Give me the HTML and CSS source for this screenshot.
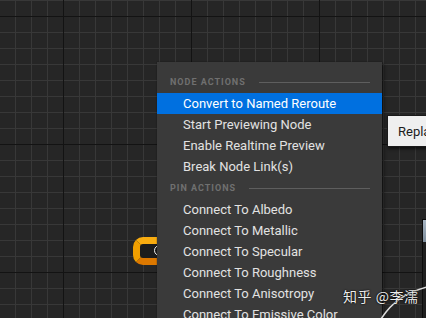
FILE: index.html
```html
<!DOCTYPE html>
<html>
<head>
<meta charset="utf-8">
<link rel="stylesheet" href="styles.css">
</head>
<body>
<div class="canvas">
  <div class="node-pin"><span class="pin-dot"></span></div>
  <div class="node-right"><div class="node-right-head"></div></div>
  <div class="menu">
    <div class="section"><span class="section-label">NODE ACTIONS</span><span class="section-line"></span></div>
    <div class="item active">Convert to Named Reroute</div>
    <div class="item">Start Previewing Node</div>
    <div class="item">Enable Realtime Preview</div>
    <div class="item">Break Node Link(s)</div>
    <div class="section"><span class="section-label">PIN ACTIONS</span><span class="section-line"></span></div>
    <div class="item">Connect To Albedo</div>
    <div class="item">Connect To Metallic</div>
    <div class="item">Connect To Specular</div>
    <div class="item">Connect To Roughness</div>
    <div class="item">Connect To Anisotropy</div>
    <div class="item">Connect To Emissive Color</div>
  </div>
  <div class="tooltip">Replace</div>
  <svg class="wire" width="426" height="318" viewBox="0 0 426 318">
    <path d="M381 319 C 392 302, 405 293, 427 287" fill="none" stroke="#dcdcdc" stroke-width="1.6"/>
  </svg>
  <div class="watermark">知乎 @李濡</div>
</div>
</body>
</html>
```
FILE: styles.css
```css
html, body {
  margin: 0;
  padding: 0;
  width: 426px;
  height: 318px;
  overflow: hidden;
}
.canvas {
  position: relative;
  width: 426px;
  height: 318px;
  overflow: hidden;
  background-color: #262626;
  background-image:
    linear-gradient(90deg, #131313 1px, transparent 1px),
    linear-gradient(180deg, #131313 1px, transparent 1px),
    linear-gradient(90deg, #383838 1px, transparent 1px),
    linear-gradient(180deg, #383838 1px, transparent 1px);
  background-size: 128px 128px, 128px 128px, 16px 16px, 16px 16px;
  background-position: 63px 0, 0 16px, 15px 0, 0 0;
  font-family: Roboto, "Liberation Sans", sans-serif;
}
.node-pin {
  position: absolute;
  left: 133px;
  top: 237px;
  width: 34px;
  height: 14px;
  border: 7px solid #f09a00;
  border-color: #f8ac10 #f09a00 #dc7800 #f2a000;
  border-radius: 10px;
  background: #1c1c1c;
}
.pin-dot {
  position: absolute;
  left: 14px;
  top: 1px;
  width: 9px;
  height: 9px;
  border: 1.5px solid #f2f2f2;
  border-radius: 50%;
}
.node-right {
  position: absolute;
  left: 422px;
  top: 219px;
  width: 20px;
  height: 120px;
  border-left: 1px solid #0c0c0c;
  border-top: 1px solid #0c0c0c;
  background: #1f1f1f;
}
.node-right-head {
  height: 22px;
  background: linear-gradient(180deg, #a8b6c4, #7d8c9a);
}
.wire {
  position: absolute;
  left: 0;
  top: 0;
}
.watermark {
  position: absolute;
  left: 343px;
  top: 287px;
  font-family: "Noto Sans CJK SC", sans-serif;
  font-size: 14px;
  line-height: 18px;
  color: #ececec;
  text-shadow: 0 0 2px #000, 0 0 1px #000;
  letter-spacing: 0.5px;
}
.menu {
  position: absolute;
  left: 157px;
  top: 62px;
  width: 225px;
  height: 280px;
  padding-top: 9px;
  box-sizing: border-box;
  background: #3a3a3a;
  box-shadow: 2px 2px 3px rgba(0,0,0,0.55), 0 0 1px rgba(0,0,0,0.6);
}
.section {
  display: flex;
  align-items: center;
  height: 22px;
  padding: 0 12px 0 13px;
  gap: 13px;
}
.section-label {
  font-size: 9px;
  font-weight: bold;
  letter-spacing: 1px;
  color: #707070;
  white-space: nowrap;
}
.section-line {
  flex: 1;
  height: 1px;
  background: #5e5e5e;
}
.item {
  height: 21px;
  line-height: 21px;
  padding-left: 26px;
  font-size: 13px;
  color: #e2e2e2;
  white-space: nowrap;
}
.item.active {
  background: #0070e0;
  color: #ffffff;
}
.tooltip {
  position: absolute;
  left: 387px;
  top: 115px;
  width: 60px;
  height: 32px;
  box-sizing: border-box;
  padding-left: 10px;
  line-height: 31px;
  font-size: 13px;
  color: #1c1c1c;
  background: #efefef;
  border: 1px solid #1a1a1a;
  box-shadow: 1px 2px 3px rgba(0,0,0,0.6);
  white-space: nowrap;
}
```
